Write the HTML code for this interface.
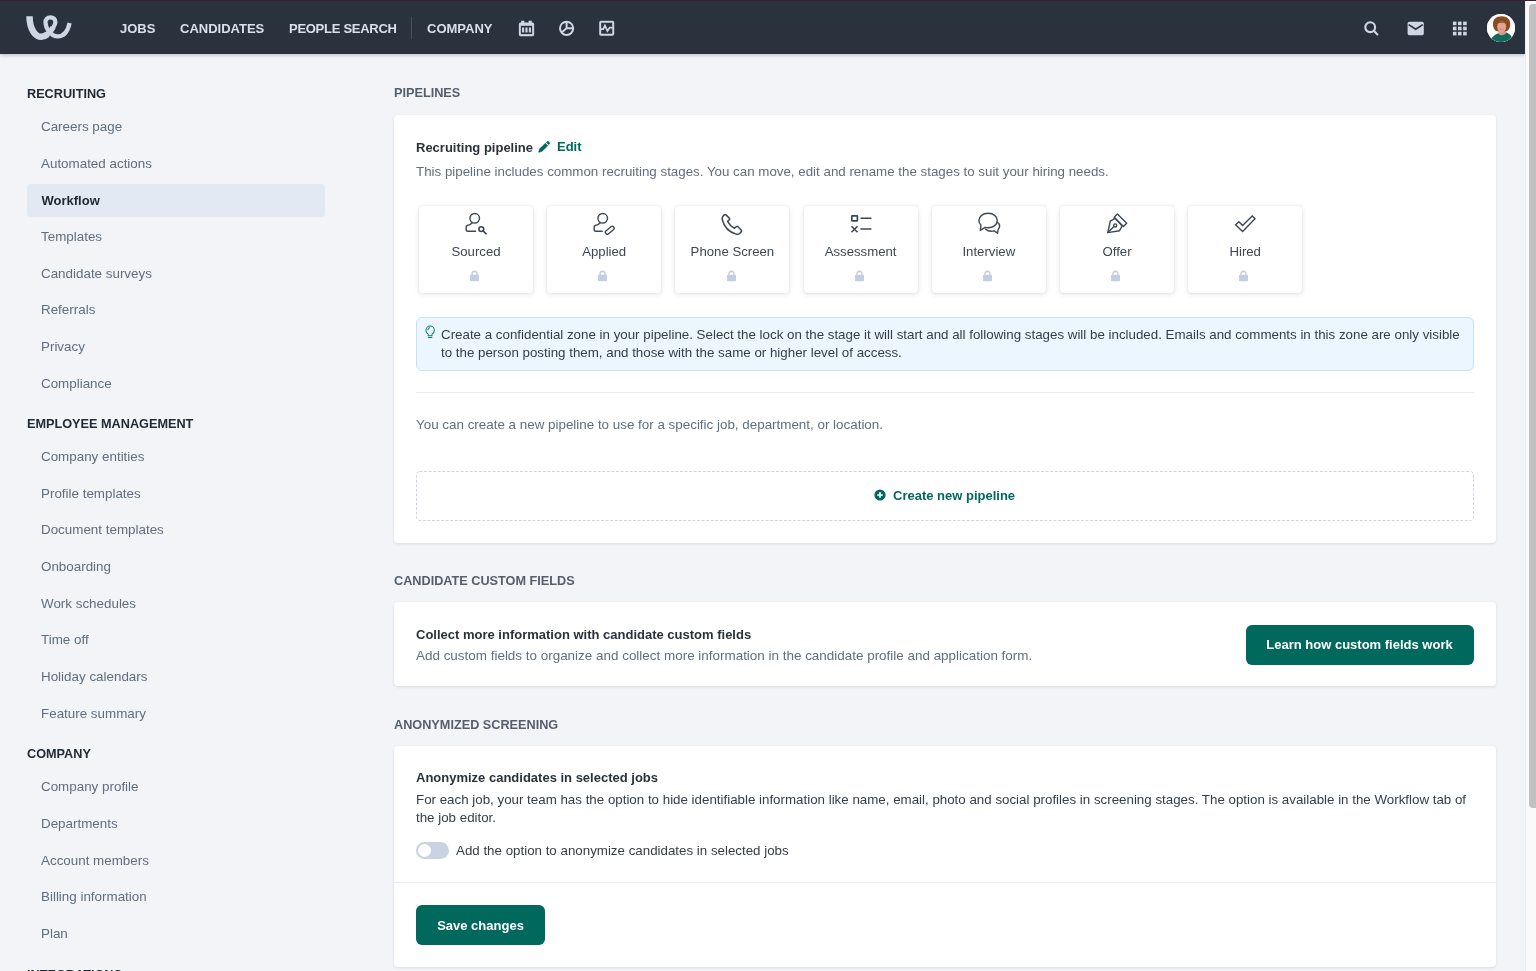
<!DOCTYPE html>
<html lang="en">
<head>
<meta charset="utf-8">
<title>Workflow settings</title>
<style>
*{box-sizing:border-box;margin:0;padding:0}
html,body{width:1536px;height:971px;overflow:hidden}
body{font-family:"Liberation Sans",sans-serif;will-change:transform;background:#f2f4f8;color:#333e49;position:relative;font-size:13px}
/* ---------- top nav ---------- */
.topline{position:absolute;left:0;top:0;width:1536px;height:1px;background:#3b2038;z-index:5}
.nav{position:absolute;left:0;top:0;width:1525px;height:54.400px;background:#2a333d;z-index:3;box-shadow:0 1px 4px rgba(30,40,60,.28)}
.nav .logo{position:absolute;left:20px;top:8px}
.nav .item{position:absolute;top:21px;height:15px;line-height:15px;font-size:13px;font-weight:bold;color:#d8e0ea;letter-spacing:0;white-space:nowrap}
.nav .sep{position:absolute;left:411px;top:17px;width:1px;height:22px;background:#46505c}
.nav svg.ic{position:absolute}
.avatar{position:absolute;left:1487px;top:14px;width:28px;height:28px;border-radius:50%;background:#fff;overflow:hidden}
/* ---------- scrollbar ---------- */
.sbar{position:absolute;left:1525px;top:0;width:11px;height:971px;background:#fafafa;border-left:1px solid #ececec;z-index:4}
.sbar .thumb{position:absolute;left:3px;top:4px;width:8px;height:804px;background:#c1c1c1;border-radius:4px 0 0 4px}
/* ---------- sidebar ---------- */
.side{position:absolute;left:0;top:54px;width:384px;height:917px}
.side .h{position:absolute;left:27px;height:16px;line-height:16px;font-size:12.7px;font-weight:bold;color:#222b35;letter-spacing:0;white-space:nowrap}
.side .i{position:absolute;left:27px;width:298px;height:33px;line-height:33px;padding-left:14px;font-size:13.4px;color:#616e7f;border-radius:4px;white-space:nowrap}
.side .i.on{background:#e3e9f2;color:#222b35;font-weight:bold;font-size:13px}
/* ---------- main ---------- */
.sec{position:absolute;left:394px;height:16px;line-height:16px;font-size:12.700px;font-weight:bold;color:#545f6d;letter-spacing:0;white-space:nowrap}
.card{position:absolute;left:394px;width:1102px;background:#fff;border-radius:4px;box-shadow:0 1px 3px rgba(40,55,80,.13)}
.t{position:absolute;white-space:nowrap;font-size:13.33px;line-height:18px;height:18px}
.t.b{font-weight:bold;color:#29323d;font-size:13px}
.t.g{color:#616e7f}
.t.d{color:#333e49}
.green{color:#00685c}
.btn{position:absolute;background:#00685c;color:#fff;font-weight:bold;font-size:13px;border-radius:6px;text-align:center;white-space:nowrap}
.stage{position:absolute;top:90.600px;width:114px;height:87px;background:#fff;border-radius:4px;box-shadow:0 1px 5px rgba(40,55,80,.15),0 0 1.500px rgba(40,55,80,.10)}
.stage .n{position:absolute;left:0;width:100%;top:37px;height:18px;line-height:18px;text-align:center;font-size:13.200px;color:#3d4855}
.stage svg.si{position:absolute;left:45px;top:5px}
.stage svg.lk{position:absolute;left:50.300px;top:64px}
.info{position:absolute;left:22px;top:202px;width:1058px;height:53.500px;background:#ebf6ff;border:1px solid #c7e2fb;border-radius:6px}
.hr{position:absolute;left:22px;width:1058px;height:1px;background:#e9edf3}
.dash{position:absolute;left:22px;top:355.500px;width:1058px;height:50px}
.toggle{position:absolute;left:22px;top:96.200px;width:33px;height:17px;border-radius:8.500px;background:#c9d3e1}
.toggle i{position:absolute;left:1.800px;top:1.800px;width:13.400px;height:13.400px;border-radius:50%;background:#fff}
</style>
</head>
<body>
<div class="topline"></div>
<div class="nav" id="nav">
  <div class="item" style="left:120px">JOBS</div>
  <div class="item" style="left:180px">CANDIDATES</div>
  <div class="item" style="left:289px;letter-spacing:-.280px">PEOPLE SEARCH</div>
  <div class="sep"></div>
  <div class="item" style="left:427px">COMPANY</div>
  <svg class="logo" width="64" height="40" viewBox="0 0 64 40" fill="none" stroke="#cdd6e2" stroke-linecap="butt" stroke-linejoin="round">
    <path d="M9.500 8.300C9.600 14 10.500 19.500 13.200 23.400C15.200 26.500 17.800 28.850 21.200 28.850C23.500 28.850 25.500 28 27.500 26.300" stroke-width="6.500"/>
    <path d="M26 27.300C29 25.300 31.500 22.300 33.200 19.200" stroke-width="5.300"/>
    <path d="M31.500 22.300C34 18.500 35.400 16.500 35.400 14C35.400 11 33.400 9.300 30.400 9.300C27.400 9.300 25.500 11.500 25.500 14.300C25.500 20.500 31 28.400 37.800 28.400C44 28.400 48 22.500 49.600 15" stroke-width="4.200"/>
  </svg>
  <!-- calendar -->
  <svg class="ic" style="left:517.700px;top:20.200px" width="17" height="16.600" viewBox="0 0 16 16" preserveAspectRatio="none">
    <path d="M3 .8h3v1.6h4V.8h3v1.6h.6A1.6 1.6 0 0 1 15.2 4v10a1.6 1.6 0 0 1-1.6 1.6H2.4A1.6 1.6 0 0 1 .8 14V4a1.6 1.6 0 0 1 1.6-1.6H3z" fill="#cdd6e2"/>
    <rect x="2.700" y="5.600" width="10.600" height="8" fill="#2a333d"/>
    <rect x="3.800" y="7.200" width="2" height="4.800" fill="#cdd6e2"/><rect x="7" y="7.200" width="2" height="4.800" fill="#cdd6e2"/><rect x="10.200" y="7.200" width="2" height="4.800" fill="#cdd6e2"/>
  </svg>
  <!-- pie -->
  <svg class="ic" style="left:558px;top:20px" width="17" height="16" viewBox="0 0 17 16" fill="none" stroke="#cdd6e2" stroke-width="2">
    <circle cx="8.6" cy="8.3" r="6.6"/><path d="M8.6 1.7v6.6h6.6M8.6 8.3L3.6 12.4"/>
  </svg>
  <!-- chart -->
  <svg class="ic" style="left:599px;top:20px" width="16" height="16" viewBox="0 0 16 16" fill="none" stroke="#cdd6e2" stroke-width="2">
    <rect x="1.200" y="1.800" width="13" height="13" rx=".800"/><path d="M1.800 9.200h2.400l1.700-3.600 2.600 5.400 2.200-3.400h3" stroke-width="1.800" stroke-linejoin="miter"/>
  </svg>
  <!-- search -->
  <svg class="ic" style="left:1363px;top:20px" width="17" height="17" viewBox="0 0 17 17" fill="none" stroke="#cdd6e2" stroke-width="2.100">
    <circle cx="7.200" cy="7.200" r="4.900"/><path d="M10.800 10.800l3.600 3.600" stroke-linecap="round"/>
  </svg>
  <!-- mail -->
  <svg class="ic" style="left:1407px;top:21px" width="18" height="15" viewBox="0 0 18 15">
    <rect x=".6" y=".8" width="16.2" height="13.4" rx="1.6" fill="#cdd6e2"/><path d="M1.6 3.6l7.1 4.6 7.1-4.6" fill="none" stroke="#2a333d" stroke-width="1.7"/>
  </svg>
  <!-- grid -->
  <svg class="ic" style="left:1452px;top:21px" width="16" height="16" viewBox="0 0 16 16" fill="#cdd6e2">
    <rect x=".9" y=".6" width="3.6" height="3.6"/><rect x="6" y=".6" width="3.6" height="3.6"/><rect x="11.1" y=".6" width="3.6" height="3.6"/>
    <rect x=".9" y="5.7" width="3.6" height="3.6"/><rect x="6" y="5.7" width="3.6" height="3.6"/><rect x="11.1" y="5.7" width="3.6" height="3.6"/>
    <rect x=".9" y="10.8" width="3.6" height="3.6"/><rect x="6" y="10.8" width="3.6" height="3.6"/><rect x="11.1" y="10.8" width="3.6" height="3.6"/>
  </svg>
  <div class="avatar">
    <svg width="28" height="28" viewBox="0 0 28 28" style="display:block;overflow:visible">
      <rect width="28" height="30" fill="#fdfdfd"/>
      <path d="M11.400 16.400h8v6h-8z" fill="#d99c88"/>
      <path d="M14.600 2.300c4.800 0 8.600 2.700 8.600 7.600c0 3.400-1.500 6.600-3.600 7.200c-1.500.400-8.500.400-10 0C7.500 16.500 6 13.300 6 9.900C6 5 9.800 2.300 14.600 2.300z" fill="#8b4a20"/>
      <ellipse cx="14.700" cy="12.700" rx="4.500" ry="5.700" fill="#e2a393"/>
      <path d="M9.600 9.800c.800-3.400 9.400-3.400 10.200 0c-2.600-1.500-7.600-1.500-10.200 0z" fill="#8b4a20"/>
      <path d="M12.800 14.700c1 .900 2.800.900 3.800 0" fill="none" stroke="#c97f7f" stroke-width=".900"/>
      <path d="M3 30C3.800 23.400 7.300 20.700 11.300 19.300C12.600 22 17.200 22.200 19.500 18.600C22.800 19.900 26 22.600 26.800 30Z" fill="#13695a"/>
    </svg>
  </div>
</div>
<div class="sbar"><div class="thumb"></div></div>

<div class="side" id="side">
  <div class="h" style="top:32px">RECRUITING</div>
  <div class="i" style="top:56px">Careers page</div>
  <div class="i" style="top:93px">Automated actions</div>
  <div class="i on" style="top:129.5px;padding-left:14.5px">Workflow</div>
  <div class="i" style="top:166px">Templates</div>
  <div class="i" style="top:203px">Candidate surveys</div>
  <div class="i" style="top:239px">Referrals</div>
  <div class="i" style="top:276px">Privacy</div>
  <div class="i" style="top:313px">Compliance</div>
  <div class="h" style="top:362px">EMPLOYEE MANAGEMENT</div>
  <div class="i" style="top:386px">Company entities</div>
  <div class="i" style="top:423px">Profile templates</div>
  <div class="i" style="top:459px">Document templates</div>
  <div class="i" style="top:496px">Onboarding</div>
  <div class="i" style="top:533px">Work schedules</div>
  <div class="i" style="top:569px">Time off</div>
  <div class="i" style="top:606px">Holiday calendars</div>
  <div class="i" style="top:643px">Feature summary</div>
  <div class="h" style="top:692px">COMPANY</div>
  <div class="i" style="top:716px">Company profile</div>
  <div class="i" style="top:753px">Departments</div>
  <div class="i" style="top:790px">Account members</div>
  <div class="i" style="top:826px">Billing information</div>
  <div class="i" style="top:863px">Plan</div>
  <div class="h" style="top:912.5px">INTEGRATIONS</div>
</div>

<div class="sec" style="top:85px">PIPELINES</div>
<div class="card" id="c1" style="top:115px;height:428px">
  <div class="t b" style="left:22px;top:24px">Recruiting pipeline</div>
  <svg style="position:absolute;left:144px;top:26px" width="12" height="12" viewBox="0 0 12 12"><path d="M.7 11.300l.8-3.200 5.900-5.900 2.400 2.400-5.900 5.900zM8.300 1.300l.8-.8a.9.900 0 0 1 1.200 0l1.200 1.200a.9.900 0 0 1 0 1.200l-.8.800z" fill="#00685c" stroke="#00685c" stroke-width=".600" stroke-linejoin="round"/></svg>
  <div class="t green" style="left:163px;top:23px;font-weight:bold;font-size:13px">Edit</div>
  <div class="t g" style="left:22px;top:48px">This pipeline includes common recruiting stages. You can move, edit and rename the stages to suit your hiring needs.</div>
  <div class="stage" style="left:25.0px"><svg class="si" width="24" height="24" viewBox="0 0 24 24" fill="none" stroke="#3d4855" stroke-width="1.400" stroke-linecap="round" stroke-linejoin="round"><circle cx="10.700" cy="7.300" r="4.800"/><path d="M8 11.700C6.600 13.500 5.500 14.300 4.200 14.300Q2.200 14.300 2.200 16.300V18.400Q2.200 20.200 4 20.200H11.600"/><circle cx="17.300" cy="18.100" r="2.400" stroke-width="1.600"/><path d="M19.100 19.900l3 2.900" stroke-width="1.600"/></svg><div class="n">Sourced</div><svg class="lk" width="11" height="12" viewBox="0 0 11 12"><path d="M3.1 5.2V3.7a2.400 2.400 0 0 1 4.800 0v1.500" fill="none" stroke="#c3cede" stroke-width="1.500"/><rect x="1" y="4.700" width="9" height="6.600" rx="1" fill="#c3cede"/></svg></div>
  <div class="stage" style="left:153.2px"><svg class="si" width="24" height="24" viewBox="0 0 24 24" fill="none" stroke="#3d4855" stroke-width="1.400" stroke-linecap="round" stroke-linejoin="round"><circle cx="10.700" cy="7.300" r="4.800"/><path d="M8 11.700C6.600 13.500 5.500 14.300 4.200 14.300Q2.200 14.300 2.200 16.300V18.400Q2.200 20.200 4 20.200H10.200"/><rect x="12.800" y="17.400" width="10" height="3.700" rx="1.500" transform="rotate(-40 17.800 19.250)" stroke-width="1.400"/></svg><div class="n">Applied</div><svg class="lk" width="11" height="12" viewBox="0 0 11 12"><path d="M3.1 5.2V3.7a2.400 2.400 0 0 1 4.800 0v1.500" fill="none" stroke="#c3cede" stroke-width="1.500"/><rect x="1" y="4.700" width="9" height="6.600" rx="1" fill="#c3cede"/></svg></div>
  <div class="stage" style="left:281.4px"><svg class="si" width="24" height="24" viewBox="0 0 24 24" fill="none" stroke="#3d4855" stroke-width="1.400" stroke-linecap="round" stroke-linejoin="round"><path d="M4.300 3.900Q5.100 3 6 3.900L9.300 7.100Q10.100 7.900 9.300 8.700L7.600 10.400C9.100 13.400 11.500 15.800 14.500 17.300L16.300 15.700Q17.200 14.900 18 15.800L21.300 19.200Q22.100 20.100 21.200 20.900L19.600 22.500C18.800 23.300 17.500 23.500 16.200 23.100C9.200 21.100 4 15.300 2.300 8.700C1.900 7.200 2.300 6 3.100 5.100Z" stroke-width="1.500"/></svg><div class="n">Phone Screen</div><svg class="lk" width="11" height="12" viewBox="0 0 11 12"><path d="M3.1 5.2V3.7a2.400 2.400 0 0 1 4.800 0v1.500" fill="none" stroke="#c3cede" stroke-width="1.500"/><rect x="1" y="4.700" width="9" height="6.600" rx="1" fill="#c3cede"/></svg></div>
  <div class="stage" style="left:409.6px"><svg class="si" width="24" height="24" viewBox="0 0 24 24" fill="none" stroke="#3d4855" stroke-width="1.400" stroke-linecap="round" stroke-linejoin="round"><rect x="2.800" y="4.800" width="5.600" height="5.100" rx=".500" stroke-width="1.700"/><path d="M11.400 7.300h11M11.400 18h11" stroke-width="1.500" stroke-linecap="butt"/><path d="M2.500 15.200l6 6M8.500 15.200l-6 6" stroke-width="1.600" stroke-linecap="butt"/></svg><div class="n">Assessment</div><svg class="lk" width="11" height="12" viewBox="0 0 11 12"><path d="M3.1 5.2V3.7a2.400 2.400 0 0 1 4.800 0v1.500" fill="none" stroke="#c3cede" stroke-width="1.500"/><rect x="1" y="4.700" width="9" height="6.600" rx="1" fill="#c3cede"/></svg></div>
  <div class="stage" style="left:537.8px"><svg class="si" width="24" height="24" viewBox="0 0 24 24" fill="none" stroke="#3d4855" stroke-width="1.400" stroke-linecap="round" stroke-linejoin="round"><path d="M11.100 2.200C5.800 2.200 1.900 5.500 1.900 9.500c0 1.800.800 3.400 2 4.600L3.400 19.300L8 16.400c1 .300 2 .400 3.100.400C16.400 16.800 20.300 13.500 20.300 9.500S16.400 2.200 11.100 2.200z"/><path d="M20.200 11c1.500 1 2.400 2.500 2.400 4.100c0 1.300-.600 2.500-1.500 3.500L20.600 22.200L17.200 19.900c-.900.300-1.900.400-2.900.400c-2.300 0-4.300-.800-5.700-2"/></svg><div class="n">Interview</div><svg class="lk" width="11" height="12" viewBox="0 0 11 12"><path d="M3.1 5.2V3.7a2.400 2.400 0 0 1 4.800 0v1.500" fill="none" stroke="#c3cede" stroke-width="1.500"/><rect x="1" y="4.700" width="9" height="6.600" rx="1" fill="#c3cede"/></svg></div>
  <div class="stage" style="left:666.0px"><svg class="si" width="24" height="24" viewBox="0 0 24 24" fill="none" stroke="#3d4855" stroke-width="1.400" stroke-linecap="round" stroke-linejoin="round"><path d="M2.800 21.600L5.300 10.200L10 7.300L17.200 14.900L14.500 19.700Z"/><path d="M2.800 21.600L9 15.600"/><circle cx="10.200" cy="14.400" r="1.600" stroke-width="1.300"/><path d="M9.100 6.300L12.400 3.100L21.700 12.300L18.400 15.500Z"/></svg><div class="n">Offer</div><svg class="lk" width="11" height="12" viewBox="0 0 11 12"><path d="M3.1 5.2V3.7a2.400 2.400 0 0 1 4.800 0v1.500" fill="none" stroke="#c3cede" stroke-width="1.500"/><rect x="1" y="4.700" width="9" height="6.600" rx="1" fill="#c3cede"/></svg></div>
  <div class="stage" style="left:794.2px"><svg class="si" width="24" height="24" viewBox="0 0 24 24" fill="none" stroke="#3d4855" stroke-width="1.400" stroke-linecap="round" stroke-linejoin="round"><path d="M2.600 13.700L5.900 10.700L9.600 14.400L19.200 4.900L22 7.800L9.600 20.400Z" stroke-linejoin="miter"/></svg><div class="n">Hired</div><svg class="lk" width="11" height="12" viewBox="0 0 11 12"><path d="M3.1 5.2V3.7a2.400 2.400 0 0 1 4.800 0v1.500" fill="none" stroke="#c3cede" stroke-width="1.500"/><rect x="1" y="4.700" width="9" height="6.600" rx="1" fill="#c3cede"/></svg></div>
  <div class="info">
    <svg style="position:absolute;left:8.300px;top:7px" width="10.300" height="14" viewBox="0 0 11 15" fill="none" stroke="#0e7c6b" stroke-width="1.100" stroke-linecap="round"><path d="M3.500 11.400V9.800C2 8.900 1 7.400 1 5.600a4.500 4.500 0 0 1 9 0c0 1.800-1 3.300-2.500 4.200v1.600z" stroke-linejoin="round"/><path d="M3.600 13.400h3.800M3.200 5a2.300 2.300 0 0 1 1.600-2"/></svg>
    <div class="t d" style="left:24px;top:8px">Create a confidential zone in your pipeline. Select the lock on the stage it will start and all following stages will be included. Emails and comments in this zone are only visible</div>
    <div class="t d" style="left:24px;top:26px">to the person posting them, and those with the same or higher level of access.</div>
  </div>
  <div class="hr" style="top:277px"></div>
  <div class="t g" style="left:22px;top:301px;font-size:13.400px">You can create a new pipeline to use for a specific job, department, or location.</div>
  <div class="dash">
    <svg style="position:absolute;left:0;top:0" width="1058" height="50" viewBox="0 0 1058 50"><rect x=".500" y=".500" width="1057" height="49" rx="3" fill="none" stroke="#d0d7e3" stroke-width="1" stroke-dasharray="3 1.570"/></svg>
    <svg style="position:absolute;left:457.700px;top:18.400px" width="12" height="12" viewBox="0 0 12 12"><circle cx="6" cy="6" r="5.600" fill="#00685c"/><path d="M6 3.200v5.600M3.200 6h5.600" stroke="#fff" stroke-width="1.700"/></svg>
    <div class="t green" style="left:477px;top:16px;font-weight:bold;font-size:13px">Create new pipeline</div>
  </div>
</div>

<div class="sec" style="top:573px">CANDIDATE CUSTOM FIELDS</div>
<div class="card" id="c2" style="top:602px;height:84px">
  <div class="t b" style="left:22px;top:24px">Collect more information with candidate custom fields</div>
  <div class="t g" style="left:22px;top:45px;font-size:13.45px">Add custom fields to organize and collect more information in the candidate profile and application form.</div>
  <div class="btn" style="left:851.500px;top:22.500px;width:228px;height:40px;line-height:40px">Learn how custom fields work</div>
</div>

<div class="sec" style="top:717px">ANONYMIZED SCREENING</div>
<div class="card" id="c3" style="top:746px;height:221px">
  <div class="t b" style="left:22px;top:23px">Anonymize candidates in selected jobs</div>
  <div class="t d" style="left:22px;top:45px">For each job, your team has the option to hide identifiable information like name, email, photo and social profiles in screening stages. The option is available in the Workflow tab of</div>
  <div class="t d" style="left:22px;top:63px">the job editor.</div>
  <div class="toggle"><i></i></div>
  <div class="t d" style="left:62px;top:96px">Add the option to anonymize candidates in selected jobs</div>
  <div class="hr" style="top:136px;left:0;width:1102px"></div>
  <div class="btn" style="left:22px;top:159px;width:129px;height:40px;line-height:41.500px">Save changes</div>
</div>
</body>
</html>
